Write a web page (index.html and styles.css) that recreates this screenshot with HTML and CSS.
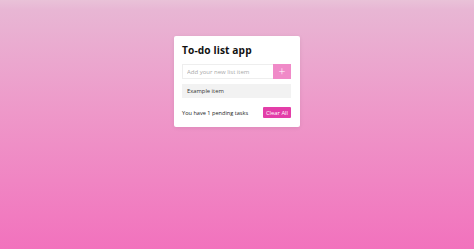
FILE: index.html
```html
<!DOCTYPE html>
<html lang="en">
<head>
    <meta charset="UTF-8">
    <meta name="viewport" content="width=device-width, initial-scale=1.0">
    <title>To-do list app</title>
    <link rel="stylesheet" href="styles.css">
</head>
<body>
    <div class="wrapper">
        <h1>To-do list app</h1>
        <div class="input-field">
            <input type="text" placeholder="Add your new list item">
            <button class="add-btn">+</button>
        </div>
        <ul class="todo-list">
            <li>Example item</li>
        </ul>
        <div class="footer">
            <span>You have <span class="pending">1</span> pending tasks</span>
            <button class="clear-btn">Clear All</button>
        </div>
    </div>
</body>
</html>
```

FILE: styles.css
```css
* {
    margin: 0;
    padding: 0;
    box-sizing: border-box;
}

body {
    font-family: "Open Sans", "DejaVu Sans", sans-serif;
    height: 100vh;
    padding-top: 36px;
    background: linear-gradient(to bottom, #e9c2d8 0%, #e8b6d4 4%, #ee98c9 45%, #f272bd 100%);
}

.wrapper {
    background: #fff;
    width: 126px;
    margin: 0 auto;
    padding: 7px 9px 9px 8px;
    border-radius: 2px;
    box-shadow: 0 1px 4px rgba(0, 0, 0, 0.08);
}

h1 {
    font-size: 10.2px;
    font-weight: 700;
    color: #111;
    line-height: 14px;
    letter-spacing: 0.1px;
}

.input-field {
    display: flex;
    margin-top: 7px;
    height: 15px;
}

.input-field input {
    flex: 1;
    min-width: 0;
    border: 1px solid #eee;
    border-right: none;
    outline: none;
    font-family: inherit;
    font-size: 6px;
    padding-left: 4px;
    color: #333;
}

.input-field input::placeholder {
    color: #a9a9a9;
}

.add-btn {
    width: 18px;
    border: none;
    background: #f08ac8;
    color: #fff;
    font-size: 12px;
    font-weight: 300;
    line-height: 15px;
    font-family: inherit;
}

.todo-list {
    list-style: none;
    margin-top: 5px;
}

.todo-list li {
    background: #f2f2f2;
    height: 14px;
    line-height: 14px;
    font-size: 5.8px;
    color: #333;
    padding-left: 5px;
}

.footer {
    display: flex;
    justify-content: space-between;
    align-items: center;
    margin-top: 9px;
    font-size: 5.6px;
    color: #222;
}

.clear-btn {
    border: none;
    background: #e33ea8;
    color: #fff;
    font-family: inherit;
    font-size: 5.8px;
    height: 11px;
    padding: 0 3px;
    border-radius: 1px;
}
```
